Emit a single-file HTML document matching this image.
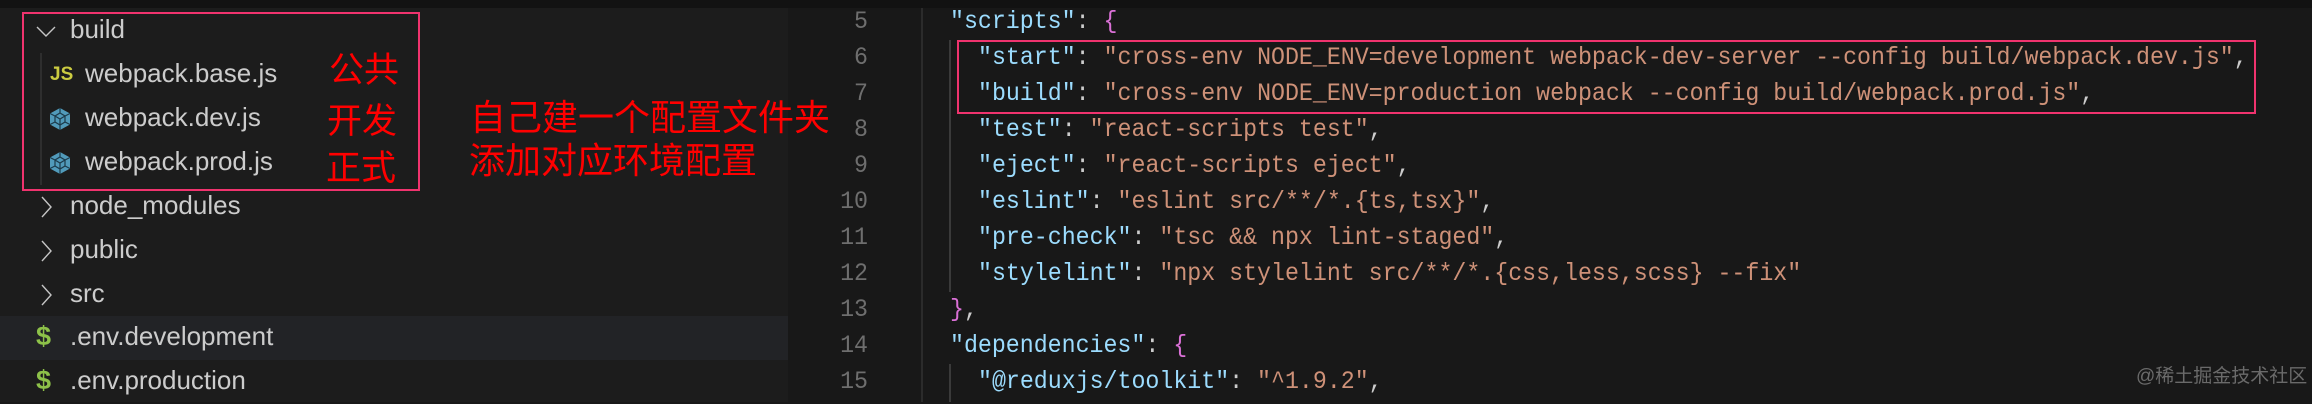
<!DOCTYPE html>
<html><head><meta charset="utf-8">
<style>
html,body{margin:0;padding:0}
body{width:2312px;height:402px;overflow:hidden;background:#181818;position:relative;font-family:"Liberation Sans","Noto Sans CJK SC",sans-serif}
#side{position:absolute;left:0;top:0;width:788px;height:402px;background:#1c1c1c}
#top{position:absolute;left:0;top:0;width:2312px;height:8px;background:#121212}
.row{position:absolute;left:0;width:788px;height:44px;line-height:44px;color:#cccccc;font-size:26px}
.row span.t{position:absolute;left:70px;top:-2px}
.chev{position:absolute;left:34px;top:10px;width:24px;height:24px}
.hl{background:#222326}
.cn{position:absolute;color:#ff0000;font-family:"Noto Sans CJK SC","WenQuanYi Zen Hei",sans-serif;white-space:nowrap;line-height:1}
.code{position:absolute;left:0;height:36px;line-height:36px;font-family:"Liberation Mono",monospace;font-size:25px;white-space:pre;transform-origin:0 50%;transform:scaleX(0.93)}
.ln{position:absolute;width:868px;text-align:right;height:36px;line-height:36px;font-family:"Liberation Mono",monospace;font-size:25px;color:#6e6e6e;transform-origin:100% 50%;transform:scaleX(0.93)}
.k{color:#9cdcfe}.s{color:#ce9178}.p{color:#cccccc}.b{color:#da70d6}
.box{position:absolute;border:2px solid #f0336e;box-sizing:border-box}
</style></head><body>
<div id="side"></div>
<div id="top"></div>

<div class="row" style="top:9px"><svg class="chev" viewBox="0 0 24 24"><path d="M3 8 L12 17 L21 8" fill="none" stroke="#c5c5c5" stroke-width="1.4"/></svg><span class="t">build</span></div>
<div style="position:absolute;left:40px;top:53px;width:2px;height:132px;background:#2e2e2e"></div>
<div class="row" style="top:53px"><span style="position:absolute;left:50px;top:0;color:#cbcb41;font-size:19px;font-weight:bold;font-family:'Liberation Sans',sans-serif">JS</span><span class="t" style="left:85px">webpack.base.js</span></div>
<div class="row" style="top:97px"><svg style="position:absolute;left:49px;top:10px" width="22" height="24" viewBox="0 0 22 24"><path d="M11 1 L21 6.5 L21 17.5 L11 23 L1 17.5 L1 6.5 Z" fill="#519aba"/><path d="M11 6 L16 9 L16 15 L11 18 L6 15 L6 9 Z M6 9 L11 12 L16 9 M11 12 L11 18 M1 6.5 L6 9 M21 6.5 L16 9 M1 17.5 L6 15 M21 17.5 L16 15 M11 1 L11 6 M11 18 L11 23" fill="none" stroke="#1c3a4a" stroke-width="1.2"/></svg><span class="t" style="left:85px">webpack.dev.js</span></div>
<div class="row" style="top:141px"><svg style="position:absolute;left:49px;top:10px" width="22" height="24" viewBox="0 0 22 24"><path d="M11 1 L21 6.5 L21 17.5 L11 23 L1 17.5 L1 6.5 Z" fill="#519aba"/><path d="M11 6 L16 9 L16 15 L11 18 L6 15 L6 9 Z M6 9 L11 12 L16 9 M11 12 L11 18 M1 6.5 L6 9 M21 6.5 L16 9 M1 17.5 L6 15 M21 17.5 L16 15 M11 1 L11 6 M11 18 L11 23" fill="none" stroke="#1c3a4a" stroke-width="1.2"/></svg><span class="t" style="left:85px">webpack.prod.js</span></div>
<div class="row" style="top:185px"><svg class="chev" viewBox="0 0 24 24"><path d="M8 2 L17 12 L8 22" fill="none" stroke="#c5c5c5" stroke-width="1.4"/></svg><span class="t">node_modules</span></div>
<div class="row" style="top:229px"><svg class="chev" viewBox="0 0 24 24"><path d="M8 2 L17 12 L8 22" fill="none" stroke="#c5c5c5" stroke-width="1.4"/></svg><span class="t">public</span></div>
<div class="row" style="top:273px"><svg class="chev" viewBox="0 0 24 24"><path d="M8 2 L17 12 L8 22" fill="none" stroke="#c5c5c5" stroke-width="1.4"/></svg><span class="t">src</span></div>
<div class="row hl" style="top:316px"><span style="position:absolute;left:36px;top:-2px;color:#8dc149;font-size:27px;font-weight:bold">$</span><span class="t">.env.development</span></div>
<div class="row" style="top:360px"><span style="position:absolute;left:36px;top:-2px;color:#8dc149;font-size:27px;font-weight:bold">$</span><span class="t">.env.production</span></div>

<div class="box" style="left:22px;top:12px;width:398px;height:179px"></div>
<div class="cn" style="left:329px;top:50px;font-size:35px">公共</div>
<div class="cn" style="left:327px;top:101px;font-size:35px">开发</div>
<div class="cn" style="left:326px;top:148px;font-size:35px">正式</div>
<div class="cn" style="left:470px;top:97px;font-size:36px">自己建一个配置文件夹</div>
<div class="cn" style="left:469px;top:140px;font-size:36px">添加对应环境配置</div>

<div style="position:absolute;left:921px;top:8px;width:2px;height:394px;background:#2b2b2b"></div>
<div style="position:absolute;left:949px;top:40px;width:2px;height:252px;background:#3a3a3a"></div>
<div style="position:absolute;left:949px;top:364px;width:2px;height:38px;background:#3a3a3a"></div>

<div class="ln" style="top:4px">5</div>
<div class="ln" style="top:40px">6</div>
<div class="ln" style="top:76px">7</div>
<div class="ln" style="top:112px">8</div>
<div class="ln" style="top:148px">9</div>
<div class="ln" style="top:184px">10</div>
<div class="ln" style="top:220px">11</div>
<div class="ln" style="top:256px">12</div>
<div class="ln" style="top:292px">13</div>
<div class="ln" style="top:328px">14</div>
<div class="ln" style="top:364px">15</div>

<div class="code" style="top:4px;left:950px"><span class="k">"scripts"</span><span class="p">: </span><span class="b">{</span></div>
<div class="code" style="top:40px;left:978px"><span class="k">"start"</span><span class="p">: </span><span class="s">"cross-env NODE_ENV=development webpack-dev-server --config build/webpack.dev.js"</span><span class="p">,</span></div>
<div class="code" style="top:76px;left:978px"><span class="k">"build"</span><span class="p">: </span><span class="s">"cross-env NODE_ENV=production webpack --config build/webpack.prod.js"</span><span class="p">,</span></div>
<div class="code" style="top:112px;left:978px"><span class="k">"test"</span><span class="p">: </span><span class="s">"react-scripts test"</span><span class="p">,</span></div>
<div class="code" style="top:148px;left:978px"><span class="k">"eject"</span><span class="p">: </span><span class="s">"react-scripts eject"</span><span class="p">,</span></div>
<div class="code" style="top:184px;left:978px"><span class="k">"eslint"</span><span class="p">: </span><span class="s">"eslint src/**/*.{ts,tsx}"</span><span class="p">,</span></div>
<div class="code" style="top:220px;left:978px"><span class="k">"pre-check"</span><span class="p">: </span><span class="s">"tsc &amp;&amp; npx lint-staged"</span><span class="p">,</span></div>
<div class="code" style="top:256px;left:978px"><span class="k">"stylelint"</span><span class="p">: </span><span class="s">"npx stylelint src/**/*.{css,less,scss} --fix"</span></div>
<div class="code" style="top:292px;left:950px"><span class="b">}</span><span class="p">,</span></div>
<div class="code" style="top:328px;left:950px"><span class="k">"dependencies"</span><span class="p">: </span><span class="b">{</span></div>
<div class="code" style="top:364px;left:978px"><span class="k">"@reduxjs/toolkit"</span><span class="p">: </span><span class="s">"^1.9.2"</span><span class="p">,</span></div>

<div class="box" style="left:957px;top:40px;width:1299px;height:74px"></div>

<div style="position:absolute;left:2136px;top:366px;font-size:19px;line-height:22px;color:#6a6a6a;font-family:'Liberation Sans','Noto Sans CJK SC',sans-serif;white-space:nowrap">@稀土掘金技术社区</div>
</body></html>
